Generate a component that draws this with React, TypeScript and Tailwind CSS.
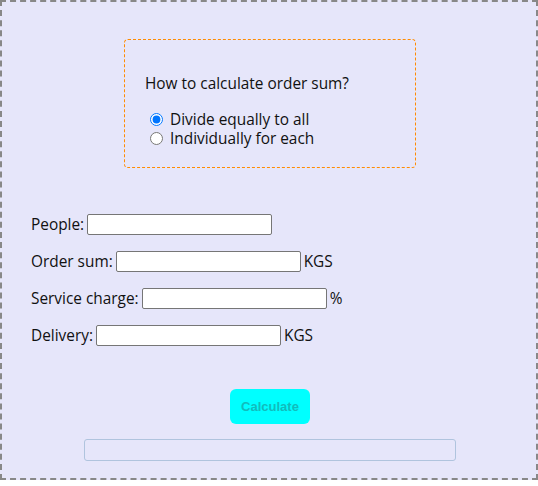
import { useState } from 'react';

const rows = [
  { label: 'People:', unit: '' },
  { label: 'Order sum:', unit: 'KGS' },
  { label: 'Service charge:', unit: '%' },
  { label: 'Delivery:', unit: 'KGS' },
];

export default function App() {
  const [mode, setMode] = useState('equal');
  return (
    <div
      className="w-[538px] h-[480px] border-2 border-dashed border-[#888888] bg-[#e6e6fa] text-[15.4px] text-[#111] pt-[37px]"
      style={{ fontFamily: '"Open Sans", "Noto Sans", sans-serif' }}
    >
      <div className="ml-[122px] w-[292px] h-[129px] border border-dashed border-[#ff8c00] rounded-[4px] pl-5 pt-[34px]">
        <div className="leading-[20px]">How to calculate order sum?</div>
        <div className="mt-[16px] flex flex-col">
          <label className="flex items-center leading-[19px]">
            <input
              type="radio"
              name="mode"
              checked={mode === 'equal'}
              onChange={() => setMode('equal')}
              className="ml-[5px] mr-[7px] w-[13px] h-[13px] accent-[#0075ff]"
            />
            Divide equally to all
          </label>
          <label className="flex items-center leading-[19px]">
            <input
              type="radio"
              name="mode"
              checked={mode === 'each'}
              onChange={() => setMode('each')}
              className="ml-[5px] mr-[7px] w-[13px] h-[13px]"
            />
            Individually for each
          </label>
        </div>
      </div>

      <div className="mt-[46px] pl-[29px] flex flex-col gap-[16px]">
        {rows.map((r) => (
          <div key={r.label} className="flex items-center h-[21px] gap-[3px]">
            <span>{r.label}</span>
            <input
              type="text"
              className="w-[185px] h-[21px] bg-white border border-[#767676] rounded-[2px]"
            />
            {r.unit && <span>{r.unit}</span>}
          </div>
        ))}
      </div>

      <div className="mt-[43px] ml-[228px]">
        <button
          className="w-[80px] h-[35px] rounded-[6px] bg-[#00ffff] text-[13px] font-bold text-[#10bcbc]"
          style={{ fontFamily: '"Liberation Sans", Arial, sans-serif' }}
        >
          Calculate
        </button>
      </div>

      <div className="mt-[15px] ml-[82px] w-[372px] h-[22px] border border-[#b0c4de] rounded-[3px]" />
    </div>
  );
}
